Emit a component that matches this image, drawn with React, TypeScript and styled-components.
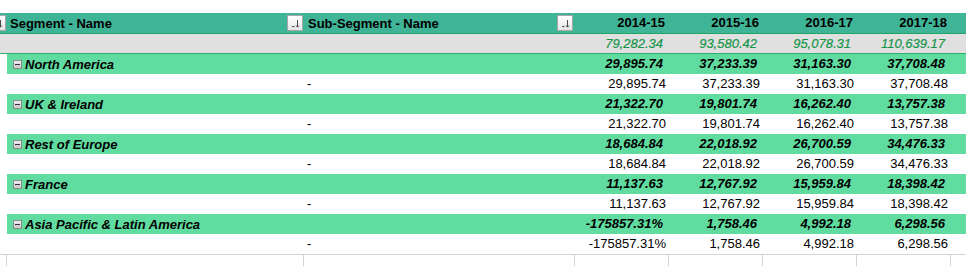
import styled, { createGlobalStyle } from "styled-components";

const GlobalStyle = createGlobalStyle`
  html, body {
    margin: 0;
    padding: 0;
    background: #ffffff;
  }
  body {
    font-family: "Liberation Sans", Arial, sans-serif;
    font-size: 13px;
    color: #000000;
  }
`;

const cols = "7px 297px 271px 94px 94px 94px 94px 1fr";
const groupCols = "297px 271px 94px 94px 94px 94px 1fr";

const years = ["2014-15", "2015-16", "2016-17", "2017-18"];
const totals = ["79,282.34", "93,580.42", "95,078.31", "110,639.17"];

const segments = [
  { name: "North America", values: ["29,895.74", "37,233.39", "31,163.30", "37,708.48"] },
  { name: "UK & Ireland", values: ["21,322.70", "19,801.74", "16,262.40", "13,757.38"] },
  { name: "Rest of Europe", values: ["18,684.84", "22,018.92", "26,700.59", "34,476.33"] },
  { name: "France", values: ["11,137.63", "12,767.92", "15,959.84", "18,398.42"] },
  { name: "Asia Pacific & Latin America", values: ["-175857.31%", "1,758.46", "4,992.18", "6,298.56"] },
];

const FilterButton = ({ cut }: { cut?: boolean }) => (
  <FilterBox $cut={cut}>
    <svg width="14" height="14" viewBox="0 0 14 14">
      <polygon points="3.5,10 7,10 5.25,11.5" fill="#4a4a4a" />
      <line x1="9.5" y1="4" x2="9.5" y2="11" stroke="#4a4a4a" strokeWidth="1" />
      <polyline points="8,9.5 9.5,11.2 11,9.5" fill="none" stroke="#4a4a4a" strokeWidth="1" />
    </svg>
  </FilterBox>
);

const Collapse = () => (
  <CollapseIcon width="9" height="9" viewBox="0 0 9 9">
    <defs>
      <linearGradient id="cg" x1="0" y1="0" x2="0" y2="1">
        <stop offset="0" stopColor="#f2f2f2" />
        <stop offset="1" stopColor="#c4c4c4" />
      </linearGradient>
    </defs>
    <rect x="0.5" y="0.5" width="8" height="8" fill="url(#cg)" stroke="#8c8c8c" />
    <line x1="2" y1="4.5" x2="7" y2="4.5" stroke="#333" strokeWidth="1" />
  </CollapseIcon>
);

const App = () => {
  return (
    <Sheet>
      <GlobalStyle />
      <HeaderRow>
        <EdgeCell>
          <FilterButton cut />
        </EdgeCell>
        <HeadCell>
          <span>Segment - Name</span>
          <FilterButton />
        </HeadCell>
        <HeadCell $sub>
          <span>Sub-Segment - Name</span>
          <FilterButton />
        </HeadCell>
        {years.map((y) => (
          <YearCell key={y}>{y}</YearCell>
        ))}
        <div />
      </HeaderRow>
      <TotalRow>
        <div />
        <div />
        <div />
        {totals.map((t) => (
          <TotalCell key={t}>{t}</TotalCell>
        ))}
        <div />
      </TotalRow>
      {segments.map((s) => (
        <div key={s.name}>
          <GroupRow>
            <GroupName>
              <Collapse />
              {s.name}
            </GroupName>
            <div />
            {s.values.map((v, i) => (
              <GroupValue key={i}>{v}</GroupValue>
            ))}
            <div />
          </GroupRow>
          <DetailRow>
            <div />
            <div />
            <SubName>-</SubName>
            {s.values.map((v, i) => (
              <Value key={i}>{v}</Value>
            ))}
            <div />
          </DetailRow>
        </div>
      ))}
      <EmptyRow>
        <GridCell />
        <GridCell />
        <GridCell />
        <GridCell />
        <GridCell />
        <GridCell />
        <GridCell />
        <div />
      </EmptyRow>
    </Sheet>
  );
};

export default App;

const Sheet = styled.div`
  width: 966px;
  height: 266px;
  overflow: hidden;
  padding-top: 13px;
  box-sizing: border-box;
`;

const Row = styled.div`
  display: grid;
  grid-template-columns: ${cols};
  align-items: center;
`;

const HeaderRow = styled(Row)`
  height: 20px;
  background: #40b497;
  border-bottom: 1px solid #22a463;
  font-weight: bold;
`;

const EdgeCell = styled.div`
  width: 7px;
  height: 20px;
  overflow: hidden;
  display: flex;
  align-items: center;
  justify-content: flex-end;
`;

const HeadCell = styled.div<{ $sub?: boolean }>`
  display: flex;
  align-items: center;
  justify-content: space-between;
  padding-left: ${({ $sub }) => ($sub ? "4px" : "3px")};
  padding-right: ${({ $sub }) => ($sub ? "2px" : "1px")};
  height: 20px;
  white-space: nowrap;
`;

const FilterBox = styled.div<{ $cut?: boolean }>`
  flex: none;
  width: 14px;
  height: 14px;
  border: 1px solid #a7a7a7;
  background: linear-gradient(#ffffff, #e6e6e6);
  display: flex;
  align-items: center;
  justify-content: center;
  margin-right: ${({ $cut }) => ($cut ? "1px" : "0")};
  svg {
    display: block;
  }
`;

const YearCell = styled.div`
  text-align: right;
  padding-right: 4px;
  line-height: 20px;
`;

const TotalRow = styled(Row)`
  height: 19px;
  background: #e0e0e0;
  border-bottom: 1px solid #2fae6c;
`;

const TotalCell = styled.div`
  text-align: right;
  padding-right: 6px;
  font-style: italic;
  color: #14954a;
  line-height: 19px;
  -webkit-text-stroke: 0.2px #14954a;
`;

const GroupRow = styled.div`
  display: grid;
  grid-template-columns: ${groupCols};
  align-items: center;
  margin-left: 7px;
  height: 20px;
  background: #61dca1;
  font-weight: bold;
  font-style: italic;
`;

const GroupName = styled.div`
  display: flex;
  align-items: center;
  padding-left: 6px;
  white-space: nowrap;
`;

const CollapseIcon = styled.svg`
  flex: none;
  display: block;
  margin-right: 3px;
`;

const GroupValue = styled.div`
  text-align: right;
  padding-right: 6px;
  line-height: 20px;
`;

const DetailRow = styled(Row)`
  height: 20px;
  background: #ffffff;
`;

const SubName = styled.div`
  padding-left: 3px;
  line-height: 20px;
`;

const Value = styled.div`
  text-align: right;
  padding-right: 3px;
  line-height: 20px;
`;

const EmptyRow = styled(Row)`
  height: 20px;
  border-top: 1px solid #d4d4d4;
  align-items: stretch;
`;

const GridCell = styled.div`
  border-right: 1px solid #d4d4d4;
`;
